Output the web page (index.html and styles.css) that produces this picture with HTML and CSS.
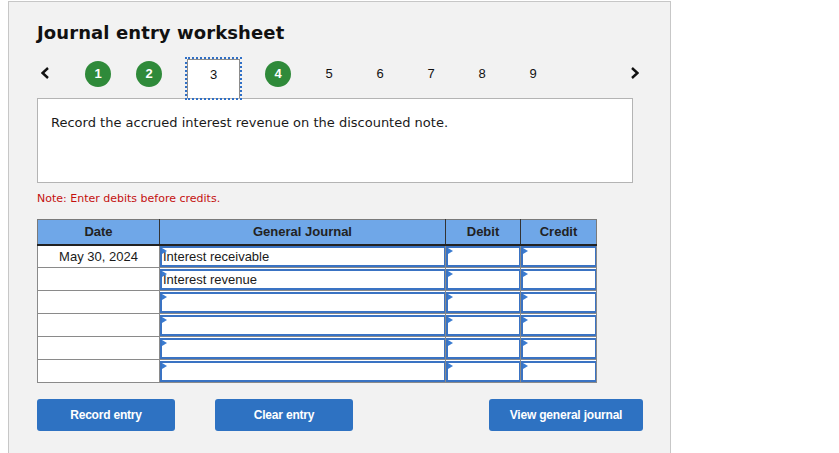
FILE: index.html
```html
<!DOCTYPE html>
<html>
<head>
<meta charset="utf-8">
<link rel="stylesheet" href="styles.css">
</head>
<body>
<div class="panel">
  <h1 class="title">Journal entry worksheet</h1>
  <div class="nav">
    <div class="nav-prev"><svg width="8" height="12" viewBox="0 0 8 12"><polyline points="7,1 1.6,6 7,11" fill="none" stroke="#111" stroke-width="2.4" stroke-linejoin="miter"/></svg></div>
    <div class="steps">
      <span class="step done">1</span>
      <span class="step done">2</span>
      <span class="step current">3</span>
      <span class="step done">4</span>
      <span class="step">5</span>
      <span class="step">6</span>
      <span class="step">7</span>
      <span class="step">8</span>
      <span class="step">9</span>
    </div>
    <div class="nav-next"><svg width="8" height="12" viewBox="0 0 8 12"><polyline points="1,1 6.4,6 1,11" fill="none" stroke="#111" stroke-width="2.4" stroke-linejoin="miter"/></svg></div>
  </div>
  <div class="question">Record the accrued interest revenue on the discounted note.</div>
  <div class="note">Note: Enter debits before credits.</div>
  <table class="journal">
    <colgroup>
      <col class="c-date"><col class="c-gj"><col class="c-dr"><col class="c-cr">
    </colgroup>
    <thead>
      <tr><th>Date</th><th>General Journal</th><th>Debit</th><th>Credit</th></tr>
    </thead>
    <tbody>
      <tr><td class="date">May 30, 2024</td><td class="in"><div class="inp">Interest receivable</div></td><td class="in"><div class="inp"></div></td><td class="in"><div class="inp"></div></td></tr>
      <tr><td class="date"></td><td class="in"><div class="inp">Interest revenue</div></td><td class="in"><div class="inp"></div></td><td class="in"><div class="inp"></div></td></tr>
      <tr><td class="date"></td><td class="in"><div class="inp"></div></td><td class="in"><div class="inp"></div></td><td class="in"><div class="inp"></div></td></tr>
      <tr><td class="date"></td><td class="in"><div class="inp"></div></td><td class="in"><div class="inp"></div></td><td class="in"><div class="inp"></div></td></tr>
      <tr><td class="date"></td><td class="in"><div class="inp"></div></td><td class="in"><div class="inp"></div></td><td class="in"><div class="inp"></div></td></tr>
      <tr><td class="date"></td><td class="in"><div class="inp"></div></td><td class="in"><div class="inp"></div></td><td class="in"><div class="inp"></div></td></tr>
    </tbody>
  </table>
  <div class="actions">
    <button class="btn btn-record">Record entry</button>
    <button class="btn btn-clear">Clear entry</button>
    <button class="btn btn-view">View general journal</button>
  </div>
</div>
</body>
</html>
```
FILE: styles.css
```css
html, body {
  margin: 0;
  padding: 0;
  background: #fff;
  overflow: hidden;
}
body {
  height: 453px;
}
.panel {
  margin: 1px 0 0 8px;
  width: 633px;
  min-height: 480px;
  background: #f2f2f2;
  border: 1px solid #c7c7c7;
  padding: 20px 0 0 28px;
  box-sizing: content-box;
  font-family: "DejaVu Sans", Verdana, sans-serif;
}
.title {
  margin: 0;
  font-size: 18px;
  line-height: 22px;
  font-weight: bold;
  color: #111;
  letter-spacing: 0.1px;
}
.nav {
  margin-top: 15px;
  width: 606px;
  height: 39px;
  display: flex;
  align-items: flex-start;
}
.nav-prev {
  width: 48px;
  padding: 8px 0 0 4px;
  box-sizing: border-box;
}
.nav-prev svg, .nav-next svg { display: block; }
.nav-next {
  margin-left: auto;
  padding: 8px 4px 0 0;
}
.steps {
  display: flex;
  gap: 25px;
  align-items: flex-start;
}
.step {
  width: 26px;
  height: 26px;
  margin-top: 2px;
  line-height: 26px;
  text-align: center;
  font-family: "Liberation Sans", Arial, sans-serif;
  font-size: 13px;
  color: #111;
}
.step.done {
  border-radius: 50%;
  background: #2f8a3a;
  color: #fff;
  font-weight: bold;
}
.step.current {
  width: 53px;
  height: 39px;
  margin-top: 0;
  box-sizing: border-box;
  background: #fff;
  border: 1px solid #8c8c8c;
  border-bottom: none;
  line-height: 29px;
  outline: 2px dotted #2f6fc6;
  outline-offset: 0;
  position: relative;
  z-index: 2;
}
.question {
  width: 596px;
  height: 85px;
  box-sizing: border-box;
  background: #fff;
  border: 1px solid #b4b4b4;
  padding: 16px 0 0 13px;
  font-size: 13px;
  line-height: 16px;
  color: #1a1a1a;
}
.note {
  margin-top: 9px;
  font-size: 11px;
  line-height: 14px;
  color: #c4100f;
}
.journal {
  margin-top: 13px;
  width: 559px;
  table-layout: fixed;
  border-collapse: collapse;
  font-family: "Liberation Sans", Arial, sans-serif;
  font-size: 13px;
  color: #1a1a1a;
}
.c-date { width: 122px; }
.c-gj { width: 286px; }
.c-dr { width: 75px; }
.c-cr { width: 76px; }
.journal th {
  height: 25px;
  padding: 0;
  background: #6fa7e8;
  border: 1px solid #333;
  border-top-color: #7a7a7a;
  border-bottom: 2px solid #222;
  font-weight: bold;
  color: #222;
  text-align: center;
  box-sizing: border-box;
}
.journal th:first-child { border-left-color: #7a7a7a; }
.journal th:last-child { border-right-color: #7a7a7a; }
.journal td {
  height: 23px;
  padding: 0;
  border: 1px solid #8a8a8a;
  box-sizing: border-box;
  background: #fff;
}
.journal td.date {
  text-align: center;
}
.journal td.in {
  padding: 0;
}
.inp {
  position: relative;
  height: 21px;
  box-sizing: border-box;
  border: 2px solid #3a73c3;
  border-right-width: 1px;
  padding-left: 1px;
  line-height: 17px;
  white-space: nowrap;
  overflow: hidden;
  background: #fff;
}
.inp::before {
  content: "";
  position: absolute;
  left: 0;
  top: 0;
  width: 0;
  height: 0;
  border-top: 3px solid transparent;
  border-bottom: 3px solid transparent;
  border-left: 5px solid #3a7bd0;
}
.actions {
  margin-top: 16px;
  display: flex;
  align-items: flex-start;
}
.btn {
  height: 32px;
  border: none;
  border-radius: 3px;
  background: #2e72c2;
  color: #fff;
  font-family: "Liberation Sans", Arial, sans-serif;
  font-size: 12px;
  font-weight: bold;
  padding: 0;
  letter-spacing: -0.2px;
}
.btn-record { width: 138px; }
.btn-clear { width: 138px; margin-left: 40px; }
.btn-view { width: 154px; margin-left: 136px; }
```
